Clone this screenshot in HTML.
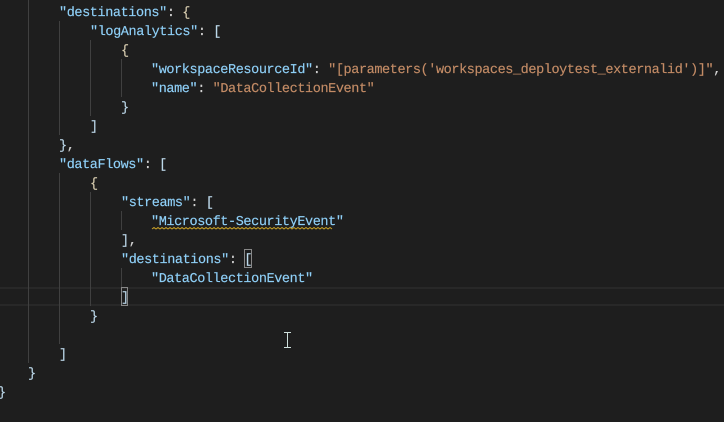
<!DOCTYPE html>
<html>
<head>
<meta charset="utf-8">
<style>
html,body{margin:0;padding:0;width:724px;height:422px;overflow:hidden;background:#1e1e1e}
#e{position:absolute;left:0;top:0;width:724px;height:422px;overflow:hidden;font-family:"Liberation Mono",monospace;font-size:13.5px;letter-spacing:-.4px;line-height:19px;color:#d4d4d4;text-rendering:geometricPrecision;-webkit-text-stroke:.15px}
.l{position:absolute;white-space:pre;height:19px;margin-top:1.500px}
.k{color:#8fd0f8}.s{color:#c48c66}.y{color:#d8cdb0}.b{color:#bcd8ea}.p{color:#d4d4d4}
.g{position:absolute;width:1px;background:#404040}
.x{position:absolute;border:1px solid #888;box-sizing:border-box}
</style>
</head>
<body>
<div id="e">
<div style="position:absolute;left:0;top:287px;width:724px;height:19px;box-sizing:border-box;border-top:2px solid #282828;border-bottom:2px solid #282828"></div>
<div class="g" style="left:28px;top:0;height:363px"></div>
<div class="g" style="left:59px;top:21px;height:114px"></div>
<div class="g" style="left:59px;top:173px;height:171px"></div>
<div class="g" style="left:90px;top:40px;height:76px"></div>
<div class="g" style="left:90px;top:192px;height:114px"></div>
<div class="g" style="left:121px;top:59px;height:38px"></div>
<div class="g" style="left:121px;top:211px;height:19px"></div>
<div class="g" style="left:121px;top:268px;height:19px"></div>
<div class="x" style="left:244px;top:249px;width:8px;height:19px"></div>
<div class="x" style="left:121px;top:287px;width:7px;height:19px"></div>

<div class="l" style="left:59px;top:2px"><span class="k">"destinations"</span><span class="p">: </span><span class="y">{</span></div>
<div class="l" style="left:90px;top:21px"><span class="k">"logAnalytics"</span><span class="p">: </span><span class="b">[</span></div>
<div class="l" style="left:121px;top:40px"><span class="y">{</span></div>
<div class="l" style="left:151px;top:59px"><span class="k">"workspaceResourceId"</span><span class="p">: </span><span class="s">"[parameters('workspaces_deploytest_externalid')]"</span><span class="p">,</span></div>
<div class="l" style="left:151px;top:78px"><span class="k">"name"</span><span class="p">: </span><span class="s">"DataCollectionEvent"</span></div>
<div class="l" style="left:121px;top:97px"><span class="b">}</span></div>
<div class="l" style="left:90px;top:116px"><span class="b">]</span></div>
<div class="l" style="left:59px;top:135px"><span class="b">}</span><span class="p">,</span></div>
<div class="l" style="left:59px;top:154px"><span class="k">"dataFlows"</span><span class="p">: </span><span class="b">[</span></div>
<div class="l" style="left:90px;top:173px"><span class="y">{</span></div>
<div class="l" style="left:121px;top:192px"><span class="k">"streams"</span><span class="p">: </span><span class="b">[</span></div>
<div class="l" style="left:151px;top:211px"><span class="k">"Microsoft-SecurityEvent"</span></div>
<div class="l" style="left:121px;top:230px"><span class="b">]</span><span class="p">,</span></div>
<div class="l" style="left:121px;top:249px"><span class="k">"destinations"</span><span class="p">: </span><span class="b">[</span></div>
<div class="l" style="left:151px;top:268px"><span class="k">"DataCollectionEvent"</span></div>
<div class="l" style="left:121px;top:287px"><span class="b">]</span></div>
<div class="l" style="left:90px;top:306px"><span class="b">}</span></div>
<div class="l" style="left:59px;top:344px"><span class="b">]</span></div>
<div class="l" style="left:28px;top:363px"><span class="b">}</span></div>
<div class="l" style="left:-2px;top:382px"><span class="b">}</span></div>

<svg style="position:absolute;left:0;top:0" width="724" height="422">
<path d="M152 229 l2 -1.500 l2 1.500 l2 -1.500 l2 1.500 l2 -1.500 l2 1.500 l2 -1.500 l2 1.500 l2 -1.500 l2 1.500 l2 -1.500 l2 1.500 l2 -1.500 l2 1.500 l2 -1.500 l2 1.500 l2 -1.500 l2 1.500 l2 -1.500 l2 1.500 l2 -1.500 l2 1.500 l2 -1.500 l2 1.500 l2 -1.500 l2 1.500 l2 -1.500 l2 1.500 l2 -1.500 l2 1.500 l2 -1.500 l2 1.500 l2 -1.500 l2 1.500 l2 -1.500 l2 1.500 l2 -1.500 l2 1.500 l2 -1.500 l2 1.500 l2 -1.500 l2 1.500 l2 -1.500 l2 1.500 l2 -1.500 l2 1.500 l2 -1.500 l2 1.500 l2 -1.500 l2 1.500 l2 -1.500 l2 1.500 l2 -1.500 l2 1.500 l2 -1.500 l2 1.500 l2 -1.500 l2 1.500 l2 -1.500 l2 1.500 l2 -1.500 l2 1.500 l2 -1.500 l2 1.500 l2 -1.500 l2 1.500 l2 -1.500 l2 1.500 l2 -1.500 l2 1.500 l2 -1.500 l2 1.500 l2 -1.500 l2 1.500 l2 -1.500 l2 1.500 l2 -1.500 l2 1.500 l2 -1.500 l2 1.500 l2 -1.500 l2 1.500 l2 -1.500 l2 1.500 l2 -1.500 l2 1.500 l2 -1.500 l2 1.500 l2 -1.500 l2 1.500" fill="none" stroke="#c9a227" stroke-width="1"/>
<path d="M284 332.500h7M284 347.500h7M287.500 333v14" fill="none" stroke="#cfe0dc" stroke-width="1"/>
</svg>
</div>
</body>
</html>
